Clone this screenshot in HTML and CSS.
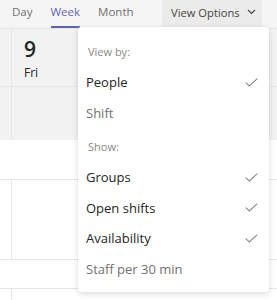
FILE: index.html
```html
<!DOCTYPE html>
<html lang="en">
<head>
  <meta charset="UTF-8">
  <title>Schedule</title>
  <link rel="stylesheet" href="styles.css">
</head>
<body>
  <div class="topbar">
    <div class="tabs">
      <span class="tab">Day</span>
      <span class="tab active">Week</span>
      <span class="tab">Month</span>
    </div>
    <button class="view-btn">View Options
      <svg width="9" height="6" viewBox="0 0 9 6"><polyline points="1,1 4.5,4.5 8,1" fill="none" stroke="#484644" stroke-width="1.2"/></svg>
    </button>
  </div>

  <div class="calendar">
    <div class="row head">
      <div class="gutter"></div>
      <div class="day">
        <div class="num">9</div>
        <div class="dname">Fri</div>
      </div>
    </div>
    <div class="row sub">
      <div class="gutter"></div>
      <div class="cell"></div>
    </div>
    <div class="row group"></div>
    <div class="row person">
      <div class="gutter"></div>
      <div class="cell"></div>
    </div>
    <div class="row group short"></div>
    <div class="row rest">
      <div class="gutter"></div>
      <div class="cell"></div>
    </div>
  </div>

  <div class="menu">
    <div class="label">View by:</div>
    <div class="item checked">People <span class="check"></span></div>
    <div class="item muted">Shift</div>
    <div class="label second">Show:</div>
    <div class="item checked">Groups <span class="check"></span></div>
    <div class="item checked">Open shifts <span class="check"></span></div>
    <div class="item checked">Availability <span class="check"></span></div>
    <div class="item muted last">Staff per 30 min</div>
  </div>

  <script>
    document.querySelectorAll('.check').forEach(c => {
      c.innerHTML = '<svg width="13" height="9" viewBox="0 0 13 9"><polyline points="0.7,4.6 4.3,8 12.3,0.6" fill="none" stroke="#8a8886" stroke-width="1.1"/></svg>';
    });
  </script>
</body>
</html>
```

FILE: styles.css
```css
* {
  box-sizing: border-box;
}
body {
  margin: 0;
  width: 277px;
  height: 300px;
  overflow: hidden;
  font-family: 'Open Sans', 'Noto Sans', sans-serif;
  background: #fff;
  color: #252423;
  position: relative;
}
.topbar {
  display: flex;
  justify-content: space-between;
  height: 29px;
  background: #f5f5f5;
  border-bottom: 1px solid #e6e6e6;
  padding-left: 12px;
  padding-right: 15px;
}
.tabs {
  display: flex;
  gap: 18px;
}
.tab {
  font-size: 11.5px;
  line-height: 23px;
  color: #707070;
  height: 28px;
  border-bottom: 2px solid transparent;
}
.tab.active {
  color: #6264a7;
  border-bottom-color: #6264a7;
}
.view-btn {
  display: flex;
  align-items: center;
  gap: 7px;
  height: 28px;
  width: 100px;
  padding: 0 0 4px 9px;
  border: none;
  background: #ebebeb;
  font-family: inherit;
  font-size: 11.2px;
  color: #484644;
}
.calendar {
  display: flex;
  flex-direction: column;
}
.row {
  display: flex;
  border-bottom: 1px solid #e6e6e6;
}
.gutter {
  width: 12px;
  border-right: 1px solid #e6e6e6;
}
.head {
  height: 58px;
  background: #f2f2f2;
}
.day {
  padding: 6px 0 0 12px;
}
.num {
  font-size: 21px;
  font-weight: 600;
  line-height: 28px;
}
.dname {
  font-size: 12px;
  line-height: 20px;
  color: #252423;
}
.sub {
  height: 53px;
  background: #f2f2f2;
  border-bottom: none;
}
.group {
  height: 40px;
}
.group.short {
  height: 29px;
}
.person {
  height: 80px;
}
.rest {
  height: 11px;
  border-bottom: none;
}
.menu {
  position: absolute;
  top: 27px;
  left: 78px;
  width: 191px;
  background: #fff;
  border-radius: 3px;
  box-shadow: 0 2px 6px rgba(0, 0, 0, 0.14), 0 0 1px rgba(0, 0, 0, 0.1);
  padding: 10px 0 8px;
}
.label {
  height: 30px;
  line-height: 30px;
  padding-left: 10px;
  font-size: 11px;
  color: #8a8886;
}
.label.second {
  margin-top: 4px;
}
.item {
  display: flex;
  justify-content: space-between;
  align-items: center;
  height: 30.5px;
  padding: 0 11px 0 8px;
  font-size: 13px;
}
.item.muted {
  color: #707070;
}
.item.last {
  margin-top: 0;
}
.check {
  display: flex;
}
```
